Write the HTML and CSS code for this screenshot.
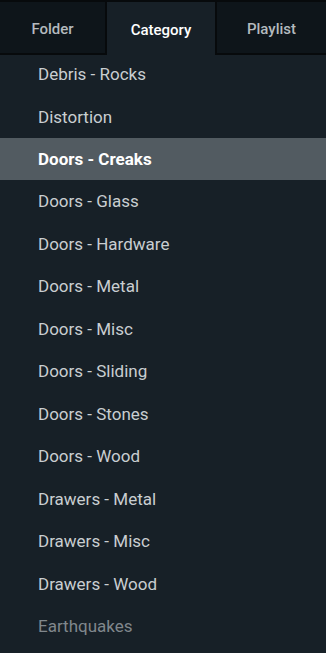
FILE: index.html
```html
<!DOCTYPE html>
<html>
<head>
<meta charset="utf-8">
<link rel="stylesheet" href="styles.css">
</head>
<body>
<div class="tabs">
  <div class="tab first">Folder</div>
  <div class="tab active">Category</div>
  <div class="tab last">Playlist</div>
</div>
<ul class="list">
  <li class="item">Debris - Rocks</li>
  <li class="item">Distortion</li>
  <li class="item selected">Doors - Creaks</li>
  <li class="item">Doors - Glass</li>
  <li class="item">Doors - Hardware</li>
  <li class="item">Doors - Metal</li>
  <li class="item">Doors - Misc</li>
  <li class="item">Doors - Sliding</li>
  <li class="item">Doors - Stones</li>
  <li class="item">Doors - Wood</li>
  <li class="item">Drawers - Metal</li>
  <li class="item">Drawers - Misc</li>
  <li class="item">Drawers - Wood</li>
  <li class="item faded">Earthquakes</li>
</ul>
</body>
</html>
```
FILE: styles.css
```css
html, body {
  margin: 0;
  padding: 0;
  height: 100%;
  overflow: hidden;
}
body {
  background: #172027;
  font-family: Roboto, "Liberation Sans", sans-serif;
  color: #c9ced1;
}
.tabs {
  display: flex;
  height: 55px;
  background: #070a0c;
  padding-top: 2px;
  box-sizing: border-box;
}
.tab {
  display: flex;
  align-items: center;
  justify-content: center;
  background: #0e151a;
  color: #b4babe;
  font-size: 15px;
  font-weight: 500;
  margin-bottom: 2px;
  padding-top: 2px;
}
.tab.first {
  flex: 0 0 105px;
  margin-right: 2px;
}
.tab.last {
  flex: 1;
  margin-left: 2px;
}
.tab.active {
  background: #172027;
  color: #ffffff;
  margin-bottom: 0;
  flex: 0 0 108px;
}
.list {
  list-style: none;
  margin: 0;
  padding: 0;
  margin-top: -2px;
}
.item {
  height: 42.5px;
  display: flex;
  align-items: center;
  padding-left: 38px;
  font-size: 17px;
}
.item.selected {
  background: #525b61;
  color: #ffffff;
  font-weight: 700;
  height: 42px;
}
.item.faded {
  color: #80878c;
}
```
